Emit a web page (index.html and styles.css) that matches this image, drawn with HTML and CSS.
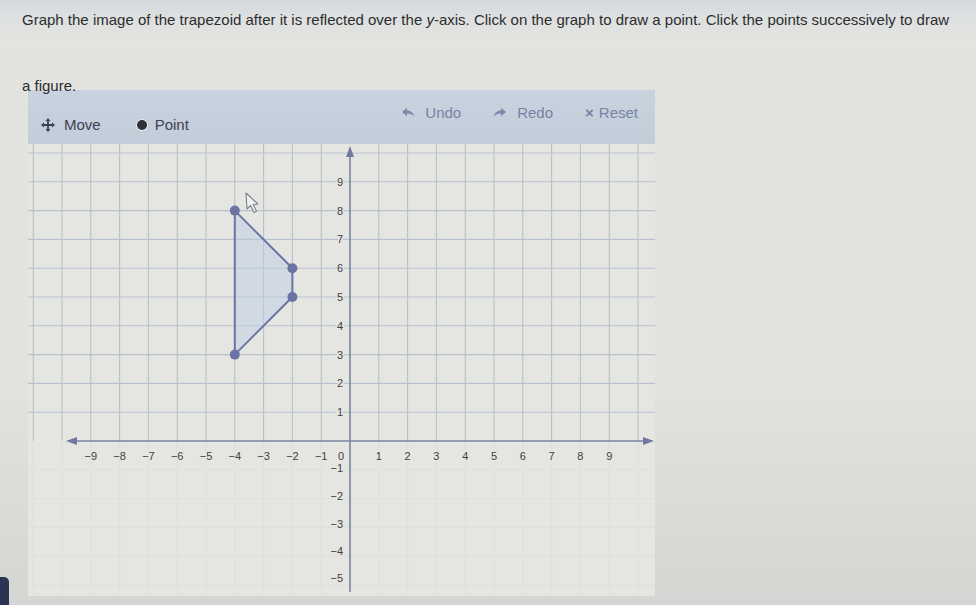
FILE: index.html
```html
<!DOCTYPE html>
<html lang="en">
<head>
<meta charset="utf-8">
<title>Reflect trapezoid</title>
<link rel="stylesheet" href="styles.css">
</head>
<body>
<div class="page">
  <p class="prompt">
    <span class="line">Graph the image of the trapezoid after it is reflected over the <i>y</i>-axis. Click on the graph to draw a point. Click the points successively to draw</span>
    <span class="line cont">a figure.</span>
  </p>

  <div class="workspace">
    <div class="toolbar">
      <div class="tools">
        <button class="tool">
          <svg class="ico-move" viewBox="0 0 16 16" width="16" height="16">
            <path d="M8 1 L10.5 4 H8.9 V7.1 H12 V5.5 L15 8 L12 10.5 V8.9 H8.9 V12 H10.5 L8 15 L5.5 12 H7.1 V8.9 H4 V10.5 L1 8 L4 5.5 V7.1 H7.1 V4 H5.5 Z" fill="#3a4150"/>
          </svg>
          <span>Move</span>
        </button>
        <button class="tool point">
          <span class="dot"></span>
          <span>Point</span>
        </button>
      </div>
      <div class="actions">
        <button class="act">
          <svg viewBox="0 0 14 12" width="14" height="12">
            <path d="M1 5 L6 1 V3.6 C10 3.6 12.5 6 13 10 C11.5 7.6 9.5 6.6 6 6.6 V9.2 Z" fill="#7b8bab"/>
          </svg>
          <span>Undo</span>
        </button>
        <button class="act">
          <svg viewBox="0 0 14 12" width="14" height="12">
            <path d="M13 5 L8 1 V3.6 C4 3.6 1.5 6 1 10 C2.5 7.6 4.5 6.6 8 6.6 V9.2 Z" fill="#7b8bab"/>
          </svg>
          <span>Redo</span>
        </button>
        <button class="act">
          <span class="x">&#215;</span>
          <span>Reset</span>
        </button>
      </div>
    </div>

    <svg class="graph" viewBox="0 0 627 452" width="627" height="452">
      <g class="grid-faint">
        <line x1="5.2" y1="297" x2="5.2" y2="452"/>
        <line x1="34" y1="297" x2="34" y2="452"/>
        <line x1="62.8" y1="297" x2="62.8" y2="452"/>
        <line x1="91.6" y1="297" x2="91.6" y2="452"/>
        <line x1="120.4" y1="297" x2="120.4" y2="452"/>
        <line x1="149.2" y1="297" x2="149.2" y2="452"/>
        <line x1="178" y1="297" x2="178" y2="452"/>
        <line x1="206.8" y1="297" x2="206.8" y2="452"/>
        <line x1="235.6" y1="297" x2="235.6" y2="452"/>
        <line x1="264.4" y1="297" x2="264.4" y2="452"/>
        <line x1="293.2" y1="297" x2="293.2" y2="452"/>
        <line x1="350.8" y1="297" x2="350.8" y2="452"/>
        <line x1="379.6" y1="297" x2="379.6" y2="452"/>
        <line x1="408.4" y1="297" x2="408.4" y2="452"/>
        <line x1="437.2" y1="297" x2="437.2" y2="452"/>
        <line x1="466" y1="297" x2="466" y2="452"/>
        <line x1="494.8" y1="297" x2="494.8" y2="452"/>
        <line x1="523.6" y1="297" x2="523.6" y2="452"/>
        <line x1="552.4" y1="297" x2="552.4" y2="452"/>
        <line x1="581.2" y1="297" x2="581.2" y2="452"/>
        <line x1="610" y1="297" x2="610" y2="452"/>
        <line x1="0" y1="325.8" x2="627" y2="325.8"/>
        <line x1="0" y1="354.6" x2="627" y2="354.6"/>
        <line x1="0" y1="383.4" x2="627" y2="383.4"/>
        <line x1="0" y1="412.2" x2="627" y2="412.2"/>
        <line x1="0" y1="441" x2="627" y2="441"/>
      </g>
      <g class="grid">
        <line x1="5.2" y1="0" x2="5.2" y2="297"/>
        <line x1="34" y1="0" x2="34" y2="297"/>
        <line x1="62.8" y1="0" x2="62.8" y2="297"/>
        <line x1="91.6" y1="0" x2="91.6" y2="297"/>
        <line x1="120.4" y1="0" x2="120.4" y2="297"/>
        <line x1="149.2" y1="0" x2="149.2" y2="297"/>
        <line x1="178" y1="0" x2="178" y2="297"/>
        <line x1="206.8" y1="0" x2="206.8" y2="297"/>
        <line x1="235.6" y1="0" x2="235.6" y2="297"/>
        <line x1="264.4" y1="0" x2="264.4" y2="297"/>
        <line x1="293.2" y1="0" x2="293.2" y2="297"/>
        <line x1="350.8" y1="0" x2="350.8" y2="297"/>
        <line x1="379.6" y1="0" x2="379.6" y2="297"/>
        <line x1="408.4" y1="0" x2="408.4" y2="297"/>
        <line x1="437.2" y1="0" x2="437.2" y2="297"/>
        <line x1="466" y1="0" x2="466" y2="297"/>
        <line x1="494.8" y1="0" x2="494.8" y2="297"/>
        <line x1="523.6" y1="0" x2="523.6" y2="297"/>
        <line x1="552.4" y1="0" x2="552.4" y2="297"/>
        <line x1="581.2" y1="0" x2="581.2" y2="297"/>
        <line x1="610" y1="0" x2="610" y2="297"/>
        <line x1="0" y1="9" x2="627" y2="9"/>
        <line x1="0" y1="37.8" x2="627" y2="37.8"/>
        <line x1="0" y1="66.6" x2="627" y2="66.6"/>
        <line x1="0" y1="95.4" x2="627" y2="95.4"/>
        <line x1="0" y1="124.2" x2="627" y2="124.2"/>
        <line x1="0" y1="153" x2="627" y2="153"/>
        <line x1="0" y1="181.8" x2="627" y2="181.8"/>
        <line x1="0" y1="210.6" x2="627" y2="210.6"/>
        <line x1="0" y1="239.4" x2="627" y2="239.4"/>
        <line x1="0" y1="268.2" x2="627" y2="268.2"/>
      </g>

      <g class="axes">
        <line x1="46" y1="297" x2="618" y2="297"/>
        <path class="arrow" d="M38 297 L49 293 L49 301 Z"/>
        <path class="arrow" d="M626 297 L615 293 L615 301 Z"/>
        <line x1="322" y1="10" x2="322" y2="448"/>
        <path class="arrow" d="M322 2 L318 13 L326 13 Z"/>
      </g>

      <g class="labels-x">
        <text x="62.8" y="316">−9</text>
        <text x="91.6" y="316">−8</text>
        <text x="120.4" y="316">−7</text>
        <text x="149.2" y="316">−6</text>
        <text x="178" y="316">−5</text>
        <text x="206.8" y="316">−4</text>
        <text x="235.6" y="316">−3</text>
        <text x="264.4" y="316">−2</text>
        <text x="293.2" y="316">−1</text>
        <text x="350.8" y="316">1</text>
        <text x="379.6" y="316">2</text>
        <text x="408.4" y="316">3</text>
        <text x="437.2" y="316">4</text>
        <text x="466" y="316">5</text>
        <text x="494.8" y="316">6</text>
        <text x="523.6" y="316">7</text>
        <text x="552.4" y="316">8</text>
        <text x="581.2" y="316">9</text>
      </g>
      <g class="labels-y">
        <text x="316" y="316">0</text>
        <text x="315" y="41.8">9</text>
        <text x="315" y="70.6">8</text>
        <text x="315" y="99.4">7</text>
        <text x="315" y="128.2">6</text>
        <text x="315" y="157">5</text>
        <text x="315" y="185.8">4</text>
        <text x="315" y="214.6">3</text>
        <text x="315" y="243.4">2</text>
        <text x="315" y="272.2">1</text>
        <text x="315" y="328">−1</text>
        <text x="315" y="356">−2</text>
        <text x="315" y="384">−3</text>
        <text x="315" y="411">−4</text>
        <text x="315" y="438">−5</text>
      </g>

      <polygon class="shape" points="206.8,66.6 264.4,124.2 264.4,153 206.8,210.6"/>
      <g class="pts">
        <circle cx="206.8" cy="66.6" r="5"/>
        <circle cx="264.4" cy="124.2" r="5"/>
        <circle cx="264.4" cy="153" r="5"/>
        <circle cx="206.8" cy="210.6" r="5"/>
      </g>

      <path class="cursor" d="M218 49 L219 65 L222.5 61.5 L226 68.5 L228.5 67.3 L225.2 60.5 L230 60 Z"/>
    </svg>
  </div>

  <div class="corner"></div>
</div>
</body>
</html>
```

FILE: styles.css
```css
html, body {
  margin: 0;
  padding: 0;
}

body {
  width: 976px;
  height: 605px;
  overflow: hidden;
  background: linear-gradient(180deg, #d3d8de 0px, #dde0e0 16px, #e3e4df 40px, #e2e3de 380px, #d4d6d3 605px);
  font-family: "Liberation Sans", Arial, sans-serif;
  color: #333;
}

.page {
  position: relative;
  height: 605px;
}

.prompt {
  margin: 0;
  height: 90px;
  box-sizing: border-box;
  padding: 12px 0 0 22px;
  font-size: 15px;
  line-height: 16px;
  color: #2c2d30;
  letter-spacing: 0;
}

.prompt .line {
  display: block;
  white-space: nowrap;
}

.prompt .cont {
  margin-top: 50px;
}

.workspace {
  margin-left: 28px;
  width: 627px;
}

.toolbar {
  height: 54px;
  background: linear-gradient(180deg, #c9d3df, #c3cdd9);
  display: flex;
  justify-content: space-between;
  align-items: flex-start;
  padding: 0 17px 0 12px;
  box-sizing: border-box;
}

.tools {
  display: flex;
  align-items: center;
  gap: 36px;
  margin-top: 26px;
}

.tool, .act {
  display: flex;
  align-items: center;
  background: none;
  border: 0;
  padding: 0;
  font-family: "Liberation Sans", Arial, sans-serif;
  font-size: 15px;
  line-height: 18px;
  cursor: pointer;
}

.tool {
  gap: 8px;
  color: #3b4250;
}

.tool.point {
  gap: 8px;
}

.dot {
  width: 10px;
  height: 10px;
  border-radius: 50%;
  background: #2f3136;
  box-shadow: 0 0 0 1px #e8ecf1;
}

.actions {
  display: flex;
  align-items: center;
  gap: 32px;
  margin-top: 14px;
}

.act {
  gap: 10px;
  color: #7484a5;
}

.act .x {
  font-size: 15px;
  line-height: 18px;
  margin-right: -5px;
  font-weight: bold;
}

.graph {
  display: block;
  background: #e5e6e2;
}

.grid line {
  stroke: #b9c1cd;
  stroke-width: 1.1;
}

.grid-faint line {
  stroke: #dcdfe1;
  stroke-width: 1;
}

.axes line {
  stroke: #7a84a3;
  stroke-width: 1.6;
}

.axes .arrow {
  fill: #6f7a9e;
}

.labels-x text,
.labels-y text {
  font-family: "Liberation Sans", Arial, sans-serif;
  font-size: 11px;
  fill: #3f4044;
  stroke: #e5e6e2;
  stroke-width: 3px;
  paint-order: stroke;
}

.labels-x text {
  text-anchor: middle;
}

.labels-y text {
  text-anchor: end;
}

.shape {
  fill: rgba(185, 204, 228, 0.45);
  stroke: #6a75a4;
  stroke-width: 2;
  stroke-linejoin: round;
}

.pts circle {
  fill: #6a74a2;
}

.cursor {
  fill: #eef0f0;
  stroke: #7b818c;
  stroke-width: 1.1;
  stroke-linejoin: round;
}

.corner {
  position: absolute;
  left: 0;
  top: 577px;
  width: 9px;
  height: 28px;
  background: #2b3452;
  border-top-right-radius: 5px;
}
```
